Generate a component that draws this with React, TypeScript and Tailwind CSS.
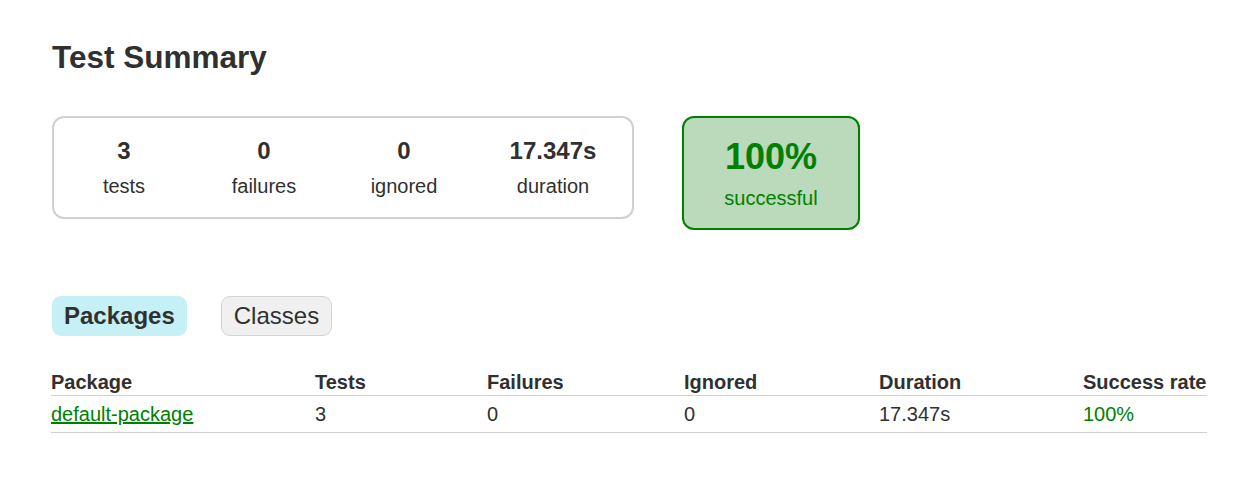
const stats = [
  { value: "3", label: "tests", width: "w-[140px]" },
  { value: "0", label: "failures", width: "w-[140px]" },
  { value: "0", label: "ignored", width: "w-[140px]" },
  { value: "17.347s", label: "duration", width: "flex-1" },
];

const columns = [
  { title: "Package", width: "w-[264px]" },
  { title: "Tests", width: "w-[172px]" },
  { title: "Failures", width: "w-[197px]" },
  { title: "Ignored", width: "w-[195px]" },
  { title: "Duration", width: "w-[204px]" },
  { title: "Success rate", width: "w-[124px]" },
];

export default function App() {
  return (
    <div className="min-h-[477px] bg-white pl-[51px] pt-[39px] font-['Liberation_Sans',Arial,sans-serif] text-[20px] text-[#303030]">
      <h1 className="pl-[1px] text-[31.5px] font-bold leading-[36px]">Test Summary</h1>

      <div className="mt-[41px] flex items-start pl-[1px]">
        <div className="flex w-[582px] rounded-[12px] border-2 border-[#d0d0d0]">
          {stats.map((s) => (
            <div key={s.label} className={`${s.width} pt-[19px] pb-[19px] text-center`}>
              <div className="mb-[10px] text-[24px] font-bold leading-[28px]">{s.value}</div>
              <div className="leading-[23px]">{s.label}</div>
            </div>
          ))}
        </div>
        <div className="ml-[48px] w-[178px] rounded-[12px] border-2 border-[#008000] bg-[#bbd9bb] pt-[18px] pb-[18px] text-center text-[#008000]">
          <div className="mb-[10px] text-[36px] font-bold leading-[41px]">100%</div>
          <div className="leading-[23px]">successful</div>
        </div>
      </div>

      <div className="mt-[66px] flex gap-[34px] pl-[1px] text-[24px]">
        <div className="rounded-[9px] border border-[#c5f0f5] bg-[#c5f0f5] px-[11px] py-[6px] font-bold leading-[26px]">
          Packages
        </div>
        <div className="rounded-[9px] border border-[#d4d4d4] bg-[#f0f0f0] px-[12px] py-[6px] leading-[26px]">
          Classes
        </div>
      </div>

      <div className="mt-[35px] w-[1156px]">
        <div className="flex border-b border-[#d0d0d0] pb-[1px] font-bold leading-[23px]">
          {columns.map((c) => (
            <div key={c.title} className={c.width}>
              {c.title}
            </div>
          ))}
        </div>
        <div className="flex border-b border-[#d0d0d0] pt-[7px] pb-[6px] leading-[23px]">
          <div className="w-[264px]">
            <a href="#" className="text-[#008000] underline">
              default-package
            </a>
          </div>
          <div className="w-[172px]">3</div>
          <div className="w-[197px]">0</div>
          <div className="w-[195px]">0</div>
          <div className="w-[204px]">17.347s</div>
          <div className="w-[124px] text-[#008000]">100%</div>
        </div>
      </div>
    </div>
  );
}
